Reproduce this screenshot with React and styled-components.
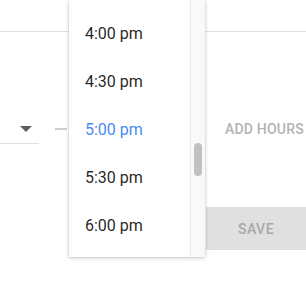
import React from "react";
import styled, { createGlobalStyle } from "styled-components";

const times = ["4:00 pm", "4:30 pm", "5:00 pm", "5:30 pm", "6:00 pm"];
const selected = "5:00 pm";

function App() {
  return (
    <>
      <GlobalStyle />
      <Page>
        <Divider />
        <HoursRow>
          <DaySelect>
            <Arrow />
          </DaySelect>
          <Dash />
          <TimeField />
          <TextButton>Add hours</TextButton>
        </HoursRow>
        <Footer>
          <SaveButton disabled>Save</SaveButton>
        </Footer>

        <Menu>
          <List>
            {times.map((t) => (
              <Item key={t} $active={t === selected}>
                {t}
              </Item>
            ))}
          </List>
          <Track>
            <Thumb />
          </Track>
        </Menu>
      </Page>
    </>
  );
}

const GlobalStyle = createGlobalStyle`
  body {
    margin: 0;
    background: #fff;
    font-family: Roboto, "Liberation Sans", sans-serif;
  }
`;

const Page = styled.div`
  position: relative;
  width: 306px;
  height: 294px;
  overflow: hidden;
`;

const Divider = styled.div`
  margin-top: 31px;
  height: 1px;
  background: #e0e0e0;
`;

const HoursRow = styled.div`
  display: flex;
  align-items: center;
  height: 48px;
  margin-top: 73px;

  & > * {
    flex-shrink: 0;
  }
`;

const DaySelect = styled.div`
  display: flex;
  align-items: center;
  justify-content: flex-end;
  width: 39px;
  height: 30px;
  padding-right: 7px;
  box-sizing: border-box;
  border-bottom: 1px solid #e0e0e0;
`;

const Arrow = styled.span`
  width: 0;
  height: 0;
  border-left: 6px solid transparent;
  border-right: 6px solid transparent;
  border-top: 6px solid #5f5f5f;
`;

const Dash = styled.div`
  width: 12px;
  height: 2px;
  margin-left: 16px;
  background: #cfcfcf;
`;

const TimeField = styled.div`
  width: 136px;
  height: 30px;
  margin-left: 2px;
`;

const TextButton = styled.button`
  margin-left: 12px;
  padding: 0 8px;
  height: 36px;
  border: 0;
  background: none;
  font-family: Roboto, "Liberation Sans", sans-serif;
  font-size: 14px;
  font-weight: 500;
  letter-spacing: 0.2px;
  text-transform: uppercase;
  white-space: nowrap;
  color: #b3b3b3;
`;

const Footer = styled.div`
  display: flex;
  justify-content: flex-end;
  margin-top: 54px;
`;

const SaveButton = styled.button`
  width: 100px;
  height: 43px;
  border: 0;
  border-radius: 0;
  background: #e0e0e0;
  font-family: Roboto, "Liberation Sans", sans-serif;
  font-size: 14px;
  font-weight: 500;
  letter-spacing: 0.5px;
  text-transform: uppercase;
  color: #a8a8a8;
`;

const Menu = styled.div`
  position: absolute;
  left: 69px;
  top: 0;
  width: 136px;
  height: 257px;
  display: flex;
  background: #fff;
  box-shadow: 0 1px 4px rgba(0, 0, 0, 0.22), 0 0 1px rgba(0, 0, 0, 0.2);
`;

const List = styled.ul`
  flex: 1;
  margin: 0;
  padding: 10px 0 0;
  list-style: none;
  overflow: hidden;
`;

const Item = styled.li`
  height: 48px;
  line-height: 48px;
  padding-left: 16px;
  font-size: 16px;
  color: ${(p) => (p.$active ? "#4a8af4" : "rgba(0, 0, 0, 0.87)")};
`;

const Track = styled.div`
  position: relative;
  width: 14px;
  background: #f9f9f9;
  border-left: 1px solid #ececec;
`;

const Thumb = styled.div`
  position: absolute;
  left: 3px;
  top: 143px;
  width: 8px;
  height: 33px;
  border-radius: 4px;
  background: #c1c1c1;
`;

export default App;
